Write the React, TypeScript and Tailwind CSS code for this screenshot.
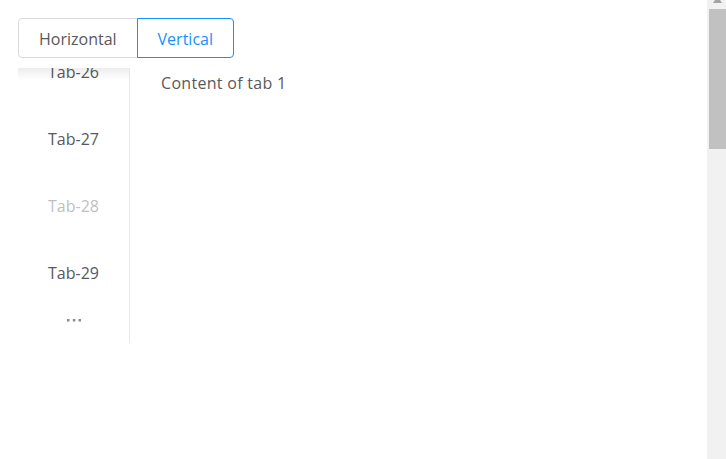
import React from "react";

const tabs = [
    { label: "Tab-26" },
    { label: "Tab-27" },
    { label: "Tab-28", disabled: true },
    { label: "Tab-29" },
];

function ModeSwitch() {
    return (
        <div className="flex">
            <div className="h-[40px] pt-px px-[20px] flex items-center border border-[#d9d9d9] rounded-l-[4px] text-[16px] text-[#595959]">
                Horizontal
            </div>
            <div className="h-[40px] pt-px px-[20px] flex items-center border border-[#1890ff] rounded-r-[4px] text-[16px] text-[#1890ff] -ml-px">
                Vertical
            </div>
        </div>
    );
}

function Scrollbar() {
    return (
        <div className="w-[19px] h-full bg-[#f1f1f1] flex flex-col items-end relative">
            <svg width="9" height="3" viewBox="0 0 9 3" className="absolute top-0 left-[6px]">
                <path d="M0 3 L2 0 L7 0 L9 3 Z" fill="#a3a3a3" />
            </svg>
            <div className="mt-[9px] w-[17px] h-[140px] bg-[#c1c1c1]" />
        </div>
    );
}

export default function App() {
    return (
        <div
            className="flex w-[726px] h-[459px] bg-white overflow-hidden"
            style={{ fontFamily: '"Open Sans", "Noto Sans", sans-serif' }}
        >
            <div className="flex-1 pt-[18px] pl-[18px]">
                <ModeSwitch />
                <div className="flex mt-[10px] h-[275px]">
                    <div className="w-[112px] flex flex-col border-r border-[#e8e8e8]">
                        <div className="relative flex-1 overflow-hidden">
                            <div className="flex flex-col -mt-[30px]">
                                {tabs.map((t) => (
                                    <div
                                        key={t.label}
                                        className={
                                            "h-[67px] flex items-center justify-center text-[16px] " +
                                            (t.disabled ? "text-[#bfbfbf]" : "text-[#595959]")
                                        }
                                    >
                                        {t.label}
                                    </div>
                                ))}
                            </div>
                            <div className="absolute top-0 left-0 right-0 h-[12px] bg-gradient-to-b from-[rgba(0,0,0,0.07)] to-transparent" />
                        </div>
                        <div className="h-[28px] mb-[9px] flex items-center justify-center">
                            <svg width="14" height="3" viewBox="0 0 14 3">
                                <rect x="0" y="0" width="2.5" height="2.5" fill="#8c8c8c" />
                                <rect x="5.8" y="0" width="2.5" height="2.5" fill="#8c8c8c" />
                                <rect x="11.5" y="0" width="2.5" height="2.5" fill="#8c8c8c" />
                            </svg>
                        </div>
                    </div>
                    <div className="pl-[31px] pt-[3px] text-[16px] leading-[24px] tracking-[0.3px] text-[#595959]">
                        Content of tab 1
                    </div>
                </div>
            </div>
            <Scrollbar />
        </div>
    );
}
